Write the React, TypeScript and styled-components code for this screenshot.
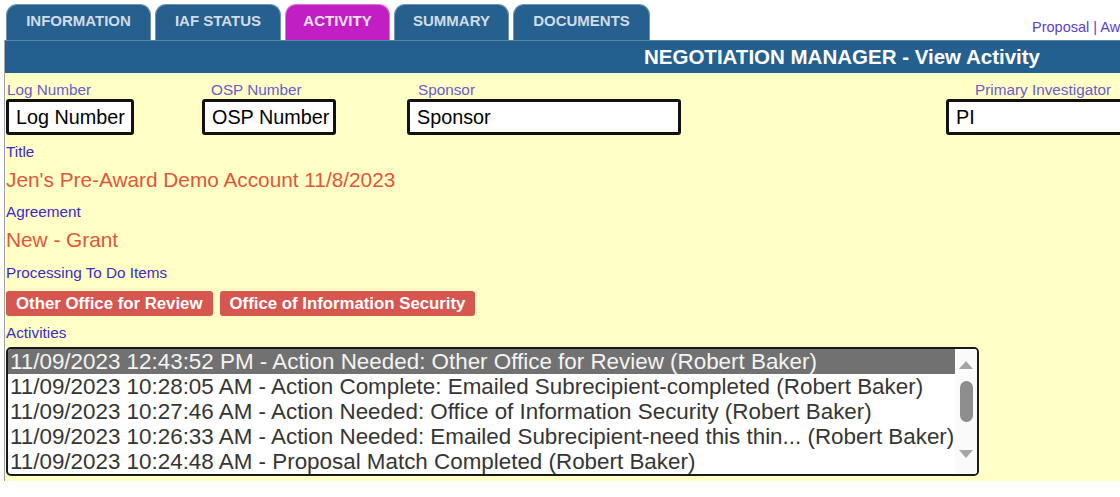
import React from "react";
import styled, { createGlobalStyle } from "styled-components";

const GlobalStyle = createGlobalStyle`
  html, body {
    margin: 0;
    padding: 0;
    background: #ffffff;
    overflow: hidden;
  }
  body {
    font-family: "Liberation Sans", Arial, sans-serif;
  }
`;

const Page = styled.div`
  width: 1120px;
  height: 497px;
  overflow: hidden;
  background: #ffffff;
`;

const TabRow = styled.div`
  display: flex;
  align-items: flex-end;
  height: 40px;
  padding-left: 6px;
  gap: 4px;
`;

const Tab = styled.div<{ $w: number; $active?: boolean }>`
  width: ${(p) => p.$w}px;
  height: 36px;
  box-sizing: border-box;
  flex: 0 0 auto;
  display: flex;
  align-items: center;
  justify-content: center;
  padding-bottom: 4px;
  background: ${(p) => (p.$active ? "#c11fc4" : "#25608f")};
  color: ${(p) => (p.$active ? "#f7e4f7" : "#d2dce7")};
  border: 1px solid ${(p) => (p.$active ? "#d77bd9" : "#7094b3")};
  border-bottom: none;
  border-radius: 11px 11px 0 0;
  font-weight: bold;
  font-size: 15px;
`;

const Links = styled.div`
  margin-left: auto;
  width: 88px;
  flex: 0 0 auto;
  overflow: hidden;
  white-space: nowrap;
  align-self: flex-end;
  margin-bottom: 5px;
  font-size: 14.5px;
  line-height: 16px;
  color: #5b3ec8;
`;

const Frame = styled.div`
  margin-left: 4px;
  border-left: 1px solid #a3a3a3;
`;

const HeaderBar = styled.div`
  height: 33px;
  box-sizing: border-box;
  background: #24608f;
  border-top: 1px solid #5d88ad;
  color: #ffffff;
  font-weight: bold;
  font-size: 20.5px;
  line-height: 32px;
  text-align: right;
  padding-right: 80px;
`;

const Panel = styled.div`
  background: #ffffc6;
  padding: 10px 0 5px 1px;
  overflow: hidden;
`;

const FieldRow = styled.div`
  display: flex;
  align-items: flex-start;
`;

const Field = styled.div<{ $w: number; $ml: number }>`
  flex: 0 0 auto;
  width: ${(p) => p.$w}px;
  margin-left: ${(p) => p.$ml}px;
  display: flex;
  flex-direction: column;
`;

const TopLabel = styled.div<{ $indent: number }>`
  padding-left: ${(p) => p.$indent}px;
  font-size: 15.3px;
  line-height: 14px;
  height: 14px;
  color: #6a5ccc;
  white-space: nowrap;
  margin-bottom: 2px;
`;

const InputBox = styled.div`
  height: 36px;
  box-sizing: border-box;
  border: 3px solid #111111;
  border-radius: 3px;
  background: #ffffff;
  padding-left: 7px;
  font-size: 19.8px;
  line-height: 30px;
  color: #000000;
  white-space: nowrap;
`;

const Label = styled.div<{ $mt: number }>`
  margin-top: ${(p) => p.$mt}px;
  font-size: 15.3px;
  line-height: 14px;
  color: #3b2bc4;
  white-space: nowrap;
`;

const Value = styled.div`
  margin-top: 7px;
  font-size: 20.8px;
  line-height: 28px;
  color: #e0573b;
`;

const ButtonRow = styled.div`
  display: flex;
  gap: 7px;
  margin-top: 11px;
`;

const TodoButton = styled.div`
  height: 25px;
  padding: 0 10px;
  background: #d65650;
  border-radius: 3px;
  color: #ffffff;
  font-weight: bold;
  font-size: 16.8px;
  line-height: 25px;
  white-space: nowrap;
`;

const ListBox = styled.div`
  margin-top: 7px;
  width: 973px;
  height: 129px;
  box-sizing: border-box;
  border: 2.5px solid #1a1a1a;
  border-radius: 5px;
  background: #ffffff;
  display: flex;
  overflow: hidden;
`;

const Rows = styled.div`
  flex: 1;
  min-width: 0;
  display: flex;
  flex-direction: column;
`;

const Row = styled.div<{ $selected?: boolean }>`
  height: 25px;
  line-height: 25px;
  padding-left: 2px;
  font-size: 22.4px;
  white-space: nowrap;
  overflow: hidden;
  color: ${(p) => (p.$selected ? "#f4f4f4" : "#353535")};
  background: ${(p) => (p.$selected ? "#717171" : "transparent")};
`;

const ScrollTrack = styled.div`
  width: 22px;
  flex: 0 0 auto;
  background: #fafafa;
  display: flex;
  flex-direction: column;
  align-items: center;
`;

const ArrowUp = styled.div`
  margin-top: 12px;
  width: 0;
  height: 0;
  border-left: 7px solid transparent;
  border-right: 7px solid transparent;
  border-bottom: 8px solid #a5a5a5;
`;

const Thumb = styled.div`
  margin-top: 12px;
  width: 13px;
  height: 41px;
  border-radius: 7px;
  background: #8d8d8d;
`;

const ArrowDown = styled.div`
  margin-top: 28px;
  width: 0;
  height: 0;
  border-left: 7px solid transparent;
  border-right: 7px solid transparent;
  border-top: 8px solid #a5a5a5;
`;

const tabs = [
  { name: "INFORMATION", w: 145 },
  { name: "IAF STATUS", w: 126 },
  { name: "ACTIVITY", w: 105, active: true },
  { name: "SUMMARY", w: 115 },
  { name: "DOCUMENTS", w: 137 },
];

const fields = [
  { label: "Log Number", value: "Log Number", w: 128, ml: 0, indent: 1 },
  { label: "OSP Number", value: "OSP Number", w: 134, ml: 68, indent: 9 },
  { label: "Sponsor", value: "Sponsor", w: 274, ml: 71, indent: 11 },
  { label: "Primary Investigator", value: "PI", w: 220, ml: 265, indent: 29 },
];

const activities = [
  "11/09/2023 12:43:52 PM - Action Needed: Other Office for Review (Robert Baker)",
  "11/09/2023 10:28:05 AM - Action Complete: Emailed Subrecipient-completed (Robert Baker)",
  "11/09/2023 10:27:46 AM - Action Needed: Office of Information Security (Robert Baker)",
  "11/09/2023 10:26:33 AM - Action Needed: Emailed Subrecipient-need this thin... (Robert Baker)",
  "11/09/2023 10:24:48 AM - Proposal Match Completed (Robert Baker)",
];

export default function App() {
  return (
    <>
      <GlobalStyle />
      <Page>
        <TabRow>
          {tabs.map((t) => (
            <Tab key={t.name} $w={t.w} $active={t.active}>
              {t.name}
            </Tab>
          ))}
          <Links>Proposal | Award</Links>
        </TabRow>
        <Frame>
          <HeaderBar>NEGOTIATION MANAGER - View Activity</HeaderBar>
          <Panel>
            <FieldRow>
              {fields.map((f) => (
                <Field key={f.label} $w={f.w} $ml={f.ml}>
                  <TopLabel $indent={f.indent}>{f.label}</TopLabel>
                  <InputBox>{f.value}</InputBox>
                </Field>
              ))}
            </FieldRow>

            <Label $mt={10}>Title</Label>
            <Value>Jen's Pre-Award Demo Account 11/8/2023</Value>

            <Label $mt={11}>Agreement</Label>
            <Value>New - Grant</Value>

            <Label $mt={12}>Processing To Do Items</Label>
            <ButtonRow>
              <TodoButton>Other Office for Review</TodoButton>
              <TodoButton>Office of Information Security</TodoButton>
            </ButtonRow>

            <Label $mt={10}>Activities</Label>
            <ListBox>
              <Rows>
                {activities.map((a, i) => (
                  <Row key={a} $selected={i === 0}>
                    {a}
                  </Row>
                ))}
              </Rows>
              <ScrollTrack>
                <ArrowUp />
                <Thumb />
                <ArrowDown />
              </ScrollTrack>
            </ListBox>
          </Panel>
        </Frame>
      </Page>
    </>
  );
}
